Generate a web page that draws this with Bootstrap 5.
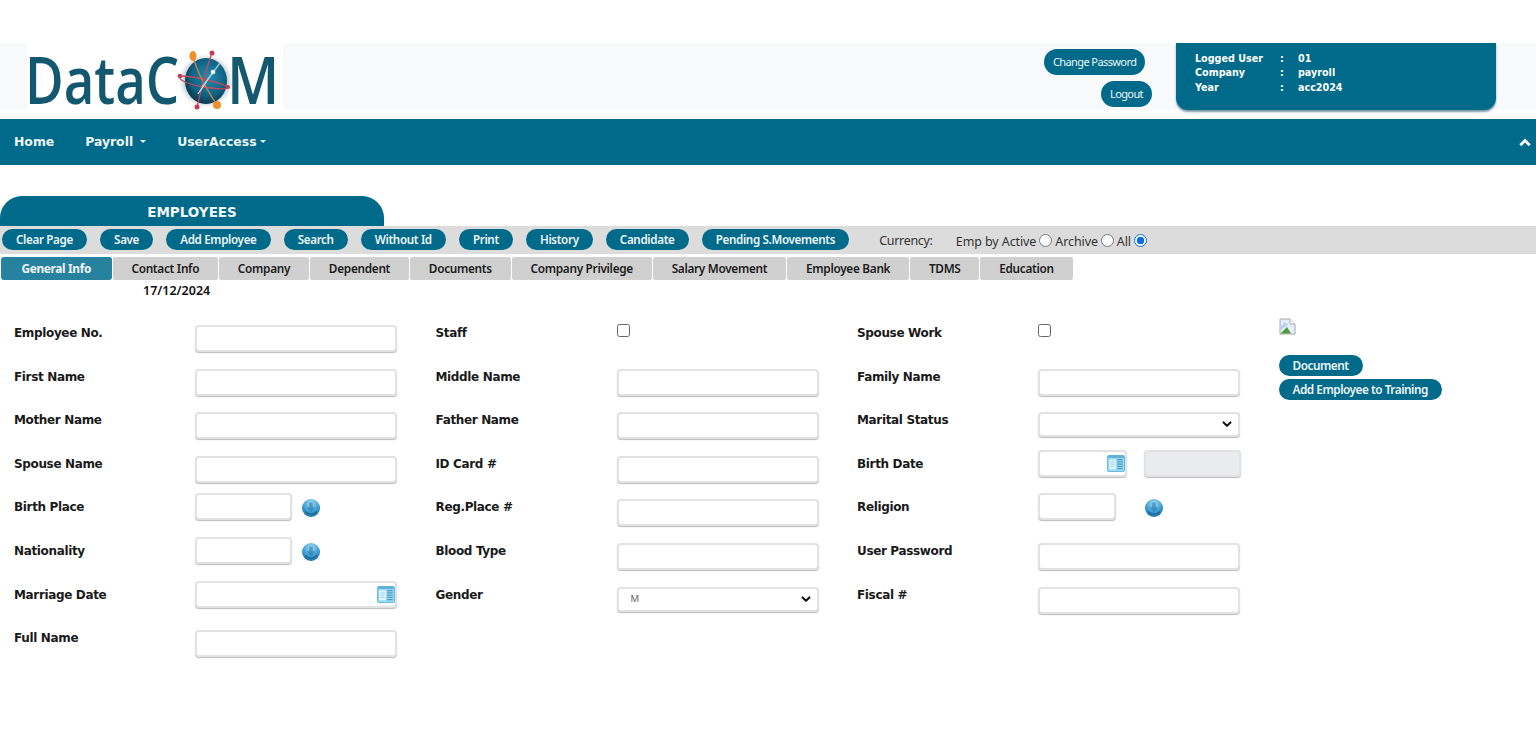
<!DOCTYPE html>
<html lang="en">
<head>
<meta charset="utf-8">
<title>Employees</title>
<link href="https://cdn.jsdelivr.net/npm/bootstrap@5.3.0/dist/css/bootstrap.min.css" rel="stylesheet">
<style>
:root{--teal:#006a8a;}
body{font-family:"Noto Sans",sans-serif;background:#fff;padding-top:43px;color:#111;overflow:hidden;}
.top-head{height:67px;background:#f8f9fa;margin-bottom:9px;}
.logo-box{margin-left:27px;width:256px;background:#fff;height:67px;position:relative;}
.logo-word{font-family:"Open Sans",sans-serif;font-weight:550;color:#14586f;font-size:66px;line-height:67px;position:absolute;top:2px;transform-origin:0 0;transform:scaleX(.8);}
.logo-d{left:-2px;}
.logo-m{left:200px;transform:scaleX(.86);}
.logo-globe{position:absolute;left:147px;top:6px;}
.head-btns{width:108px;margin-left:761px;padding-top:6px;gap:6px;align-items:flex-end;}
.pill-a{background:var(--teal);color:#f0f6f8;border:0;border-radius:13px;font-size:11px;line-height:26px;height:26px;padding:0 9px;letter-spacing:-.6px;white-space:nowrap;}
.user-box{margin-left:24px;width:320px;height:67px;background:var(--teal);color:#fff;border-radius:0 0 12px 12px;box-shadow:0 2px 2px #7f9aa5;padding:8.5px 0 0 19px;font:bold 9.6px/14.5px "DejaVu Sans",sans-serif;}
.user-box span{display:inline-block;}
.u-k{width:85px;}.u-c{width:18px;}
.main-nav{background:var(--teal);height:46px;padding:0;}
.main-nav .nav-link{color:#eef5f7;font:bold 12.4px/18px "DejaVu Sans",sans-serif;padding:0;}
.main-nav .dropdown-toggle::after{vertical-align:.18em;border-top-width:3px;border-left-width:3px;border-right-width:3px;}
.n-home{margin-left:14px;margin-top:-1px;}
.n-pay{margin-left:31px;margin-top:-1px;}
.n-pay::after{margin-left:7px;}
.n-user{margin-left:31px;margin-top:-1px;}
.n-user::after{margin-left:3px;}
.n-up{margin-left:auto;margin-right:5px;display:flex;}
.title-tab{margin-top:31px;width:384px;height:30px;background:var(--teal);color:#f2f7f9;border-radius:22px 22px 0 0;font:bold 13.5px/33px "DejaVu Sans",sans-serif;text-align:center;}
.tool-bar{background:#dcdcdc;height:28px;padding:3px 0 0 2px;gap:13.15px;}
.pill-b{background:var(--teal);color:#eef5f7;border:0;border-radius:11px;height:21px;line-height:21px;padding:0 14px;font-size:11.6px;font-weight:600;letter-spacing:-.33px;text-align:center;white-space:nowrap;}
.tool-txt{font-size:12.5px;color:#333;line-height:14px;letter-spacing:-.1px;white-space:nowrap;margin-top:5px;}
.t-cur{margin-left:17px;letter-spacing:-.3px;}
.t-emp{margin-left:10px;}
.rad{appearance:none;width:13px;height:13px;border:1px solid #777;border-radius:50%;background:#fff;margin:0 3px;display:inline-block;vertical-align:-1px;}
.rad:checked{border:1.5px solid #0b6fe0;background:radial-gradient(circle,#0b6fe0 3.5px,#fff 4px);}
.tab-row{padding:3px 0 0 1px;gap:1px;height:26px;}
.tab-x{background:#d0d0d0;color:#1c1c1c;border-radius:2px;height:23px;font-size:11.8px;font-weight:600;line-height:23px;padding:0 18.85px;text-align:center;letter-spacing:-.3px;white-space:nowrap;}
.tab-on{background:#27829f;color:#f0f6f8;font-weight:700;border-radius:3px;padding:0 20.500px;}
.date-txt{margin-left:143px;font-size:12.5px;font-weight:600;line-height:16px;height:16px;margin-top:3px;}
.form-zone{margin-top:22px;padding-left:14px;display:flex;}
.form-grid{display:grid;flex:none;grid-template-columns:421.5px 421.5px 421.5px;grid-template-rows:repeat(8,43.6px);}
.cell{display:flex;align-items:flex-start;}
.lbl{width:181px;flex:none;font:bold 12px/14px "DejaVu Sans",sans-serif;letter-spacing:-.35px;margin:5.1px 0 0;color:#1a1a1a;}
.inp{width:202px;height:27px;margin-top:4px;border:2px solid #e2e2e2;border-radius:4px;box-shadow:0 1px 1px #bbb;padding:0 6px;background-color:#fff;}
.inp-up{margin-top:-2px;}
.ico-wrap .inp{margin-top:0;display:block;}
.w-97{width:97px;}.w-78{width:78px;}.w-89{width:89px;}.w-97b{width:97px;margin-left:17px;}
.sel{height:25px;padding:0 6px 0 12px;font-size:9.5px;color:#666;background-repeat:no-repeat;background-position:right 4px center;background-size:14px 11px;background-image:url("data:image/svg+xml,%3csvg xmlns='http://www.w3.org/2000/svg' viewBox='0 0 16 16'%3e%3cpath fill='none' stroke='%23111' stroke-linecap='round' stroke-linejoin='round' stroke-width='3' d='m3 5 5 5 5-5'/%3e%3c/svg%3e");}
.chk{appearance:none;width:13px;height:13px;border:1px solid #666;border-radius:2.5px;background:#fff;margin-top:3px;}
.dis{background-color:#e9ecef;}
.ico-wrap{position:relative;display:block;height:27px;}
.ico-cal{position:absolute;right:2px;top:4px;}
.ico-globe{margin-left:10px;margin-top:4px;flex:none;}
.ico-far{margin-left:29px;}
.side{flex:none;}
.ico-broken{display:block;margin-top:-3px;margin-bottom:20px;}
.side .pill-b{display:block;margin-bottom:3px;font-size:11.8px;letter-spacing:-.48px;}
</style>
</head>
<body>
<svg width="0" height="0" class="position-absolute">
  <defs>
    <radialGradient id="gb" cx=".5" cy=".25" r=".8"><stop offset="0" stop-color="#a5dcf5"/><stop offset=".55" stop-color="#3f9fd3"/><stop offset="1" stop-color="#1a6c9e"/></radialGradient>
    <symbol id="globe" viewBox="0 0 18 18"><circle cx="9" cy="9" r="9" fill="url(#gb)"/><path d="M7.200 3.500h3.600v5h2.400L9 13 4.800 8.500h2.400z" fill="#2a78a8" opacity=".6"/><path d="M3 12.500c3 3.500 9 3.500 12 0" stroke="#0e4f78" fill="none" stroke-width="1.400" opacity=".6"/></symbol>
    <symbol id="cal" viewBox="0 0 16 16"><rect x=".5" y="1.500" width="15" height="14" rx="1" fill="#9adcf5" stroke="#6bbbdd"/><rect x="1" y="1" width="14" height="2.500" fill="#5eb2da"/><rect x="2" y="5" width="6" height="8.500" fill="#e2f5fc"/><path d="M9 5h5M9 7h5M9 9h5M9 11h5M9 13h5" stroke="#4f9cc2"/><path d="M3 7h4M3 9h4M3 11h4" stroke="#a9dbef"/></symbol>
  </defs>
</svg>

<header class="top-head d-flex">
  <div class="logo-box">
    <span class="logo-word logo-d">DataC</span>
    <svg class="logo-globe" width="62" height="64" viewBox="0 0 62 64">
      <defs>
        <radialGradient id="lg" cx=".55" cy=".42" r=".6"><stop offset="0" stop-color="#1f8fb4"/><stop offset=".7" stop-color="#0d5f80"/><stop offset="1" stop-color="#0a3448"/></radialGradient>
        <radialGradient id="hz" cx=".5" cy=".5" r=".5"><stop offset=".72" stop-color="#b9c6cc"/><stop offset="1" stop-color="#fff" stop-opacity="0"/></radialGradient>
      </defs>
      <circle cx="32" cy="32" r="29" fill="url(#hz)"/>
      <ellipse cx="32" cy="32" rx="21" ry="23" fill="url(#lg)"/>
      <g fill="none" stroke-width="1.300">
        <path d="M6 27c12 0 36 5 48 11" stroke="#c24a5c"/>
        <path d="M6 27c-3 4 10 9 24 11s24 3 24 0" stroke="#c24a5c"/>
        <path d="M19 7c4 16 14 34 24 49" stroke="#c9814b"/>
        <path d="M38 4C32 20 27 42 23 58" stroke="#c24a5c"/>
        <path d="M39 23 24 45" stroke="#dfe8ec"/>
        <path d="M46 14 28 38" stroke="#a9c6d2"/>
      </g>
      <ellipse cx="19" cy="7" rx="3.500" ry="5" fill="#ee8f2c"/>
      <ellipse cx="43" cy="56" rx="4" ry="4" fill="#ee8f2c"/>
      <circle cx="38" cy="4" r="2.500" fill="#c93a55"/>
      <circle cx="23" cy="58" r="2.500" fill="#c93a55"/>
      <circle cx="6" cy="27" r="2.300" fill="#c93a55"/>
      <circle cx="54" cy="38" r="2" fill="#c93a55"/>
      <circle cx="39" cy="23" r="2.300" fill="#fff"/>
    </svg>
    <span class="logo-word logo-m">M</span>
  </div>
  <div class="head-btns d-flex flex-column">
    <button type="button" class="btn pill-a align-self-start">Change Password</button>
    <button type="button" class="btn pill-a">Logout</button>
  </div>
  <div class="user-box">
    <div><span class="u-k">Logged User</span><span class="u-c">:</span><span>01</span></div>
    <div><span class="u-k">Company</span><span class="u-c">:</span><span>payroll</span></div>
    <div><span class="u-k">Year</span><span class="u-c">:</span><span>acc2024</span></div>
  </div>
</header>

<nav class="navbar main-nav d-flex flex-nowrap justify-content-start">
  <a class="nav-link n-home" href="#">Home</a>
  <a class="nav-link dropdown-toggle n-pay" href="#">Payroll</a>
  <a class="nav-link dropdown-toggle n-user" href="#">UserAccess</a>
  <span class="n-up"><svg width="12" height="9" viewBox="0 0 12 9"><path d="M1.300 7.300 6 2.600l4.700 4.700" fill="none" stroke="#fff" stroke-width="2.800"/></svg></span>
</nav>

<div class="title-tab">EMPLOYEES</div>

<div class="tool-bar d-flex">
  <button type="button" class="btn pill-b">Clear Page</button>
  <button type="button" class="btn pill-b">Save</button>
  <button type="button" class="btn pill-b">Add Employee</button>
  <button type="button" class="btn pill-b">Search</button>
  <button type="button" class="btn pill-b">Without Id</button>
  <button type="button" class="btn pill-b">Print</button>
  <button type="button" class="btn pill-b">History</button>
  <button type="button" class="btn pill-b">Candidate</button>
  <button type="button" class="btn pill-b">Pending S.Movements</button>
  <span class="tool-txt t-cur">Currency:</span>
  <span class="tool-txt t-emp">Emp by Active<input class="rad" type="radio" name="emp">Archive<input class="rad" type="radio" name="emp">All<input class="rad" type="radio" name="emp" checked></span>
</div>

<div class="tab-row d-flex">
  <div class="tab-x tab-on">General Info</div>
  <div class="tab-x">Contact Info</div>
  <div class="tab-x">Company</div>
  <div class="tab-x">Dependent</div>
  <div class="tab-x">Documents</div>
  <div class="tab-x">Company Privilege</div>
  <div class="tab-x">Salary Movement</div>
  <div class="tab-x">Employee Bank</div>
  <div class="tab-x">TDMS</div>
  <div class="tab-x">Education</div>
</div>

<div class="date-txt">17/12/2024</div>

<form class="form-zone">
  <div class="form-grid">
    <div class="cell"><label class="lbl">Employee No.</label><input class="inp"></div>
    <div class="cell"><label class="lbl">Staff</label><input class="chk" type="checkbox"></div>
    <div class="cell"><label class="lbl">Spouse Work</label><input class="chk" type="checkbox"></div>

    <div class="cell"><label class="lbl">First Name</label><input class="inp"></div>
    <div class="cell"><label class="lbl">Middle Name</label><input class="inp"></div>
    <div class="cell"><label class="lbl">Family Name</label><input class="inp"></div>

    <div class="cell"><label class="lbl">Mother Name</label><input class="inp"></div>
    <div class="cell"><label class="lbl">Father Name</label><input class="inp"></div>
    <div class="cell"><label class="lbl">Marital Status</label><select class="form-select inp sel"><option></option></select></div>

    <div class="cell"><label class="lbl">Spouse Name</label><input class="inp"></div>
    <div class="cell"><label class="lbl">ID Card #</label><input class="inp"></div>
    <div class="cell"><label class="lbl">Birth Date</label>
      <span class="ico-wrap inp-up"><input class="inp w-89"><svg class="ico-cal" width="18" height="18"><use href="#cal"/></svg></span>
      <input class="inp inp-up dis w-97b" disabled></div>

    <div class="cell"><label class="lbl">Birth Place</label><input class="inp inp-up w-97"><svg class="ico-globe" width="18" height="18"><use href="#globe"/></svg></div>
    <div class="cell"><label class="lbl">Reg.Place #</label><input class="inp"></div>
    <div class="cell"><label class="lbl">Religion</label><input class="inp inp-up w-78"><svg class="ico-globe ico-far" width="18" height="18"><use href="#globe"/></svg></div>

    <div class="cell"><label class="lbl">Nationality</label><input class="inp inp-up w-97"><svg class="ico-globe" width="18" height="18"><use href="#globe"/></svg></div>
    <div class="cell"><label class="lbl">Blood Type</label><input class="inp"></div>
    <div class="cell"><label class="lbl">User Password</label><input class="inp"></div>

    <div class="cell"><label class="lbl">Marriage Date</label><span class="ico-wrap inp-up"><input class="inp"><svg class="ico-cal" width="18" height="18"><use href="#cal"/></svg></span></div>
    <div class="cell"><label class="lbl">Gender</label><select class="form-select inp sel"><option>M</option></select></div>
    <div class="cell"><label class="lbl">Fiscal #</label><input class="inp"></div>

    <div class="cell"><label class="lbl">Full Name</label><input class="inp"></div>
  </div>
  <div class="side">
    <svg class="ico-broken" width="17" height="17" viewBox="0 0 17 17"><path d="M1 1h10l5 5v10H1z" fill="#e8eefc" stroke="#a8a8a8"/><path d="M11 1v5h5" fill="#fff" stroke="#a8a8a8"/><path d="M1.500 15.500 8 9l4 6.500z" fill="#4f9a3a"/><path d="M1.500 9 6 4l3 3-7.500 5z" fill="#b9cdf5"/></svg>
    <button type="button" class="btn pill-b">Document</button>
    <button type="button" class="btn pill-b">Add Employee to Training</button>
  </div>
</form>
<script src="https://cdn.jsdelivr.net/npm/bootstrap@5.3.0/dist/js/bootstrap.bundle.min.js"></script>
</body>
</html>
